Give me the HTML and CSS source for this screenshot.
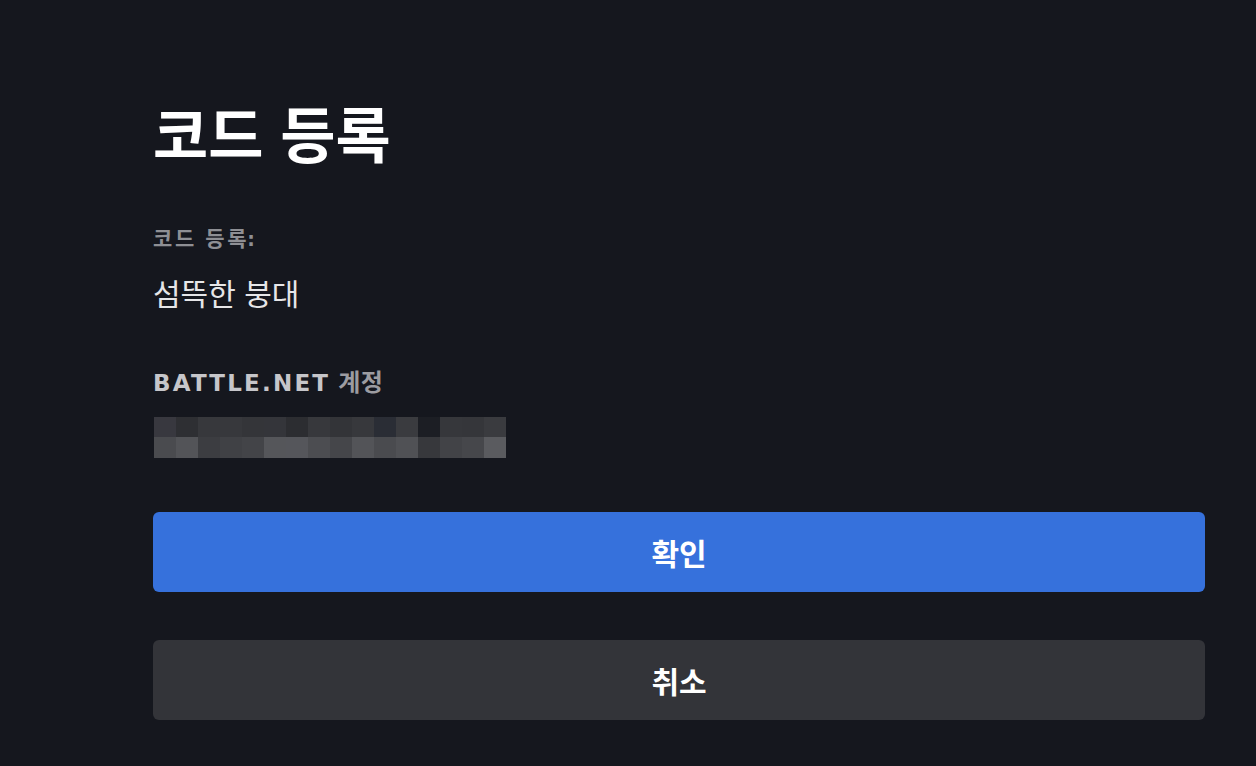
FILE: index.html
```html
<!DOCTYPE html>
<html lang="ko">
<head>
<meta charset="utf-8">
<title>코드 등록</title>
<link rel="stylesheet" href="styles.css">
</head>
<body>
<main class="page">
  <h1 class="title">코드 등록</h1>
  <section class="field">
    <div class="label">코드 등록<span class="colon">:</span></div>
    <div class="value">섬뜩한 붕대</div>
  </section>
  <section class="account">
    <div class="account-label"><span class="brand">BATTLE.NET</span> <span class="kr">계정</span></div>
    <div class="pixels">
      <i style="background:#38383f"></i><i style="background:#2e2f33"></i><i style="background:#37383c"></i><i style="background:#37383c"></i><i style="background:#343539"></i><i style="background:#34353a"></i><i style="background:#2c2d31"></i><i style="background:#37383c"></i><i style="background:#333438"></i><i style="background:#37383c"></i><i style="background:#2a2d35"></i><i style="background:#3a3b3f"></i><i style="background:#1c1e24"></i><i style="background:#36373b"></i><i style="background:#35363a"></i><i style="background:#3a3b3f"></i>
      <i style="background:#4a4b4f"></i><i style="background:#535458"></i><i style="background:#3c3d41"></i><i style="background:#404145"></i><i style="background:#434448"></i><i style="background:#55565a"></i><i style="background:#55565b"></i><i style="background:#4c4d51"></i><i style="background:#45464a"></i><i style="background:#535458"></i><i style="background:#4a4b4f"></i><i style="background:#505155"></i><i style="background:#37383c"></i><i style="background:#424347"></i><i style="background:#46474b"></i><i style="background:#5a5b5f"></i>
    </div>
  </section>
  <div class="actions">
    <button class="btn btn-primary">확인</button>
    <button class="btn btn-secondary">취소</button>
  </div>
</main>
</body>
</html>
```

FILE: styles.css
```css
html, body {
  margin: 0;
  padding: 0;
  background: #15171e;
  height: 100%;
}
body {
  font-family: "Noto Sans CJK KR", "Noto Sans", sans-serif;
  color: #ffffff;
}
.page {
  width: 1052px;
  padding: 92px 0 0 153px;
  display: flex;
  flex-direction: column;
}
.title {
  margin: 0;
  font-size: 60px;
  font-weight: 700;
  line-height: 80px;
}
.field {
  margin-top: 51px;
  display: flex;
  flex-direction: column;
}
.label {
  height: 28px;
  font-size: 21px;
  font-weight: 700;
  color: #8e8f94;
  line-height: 28px;
  letter-spacing: 2.6px;
}
.colon {
  font-family: "DejaVu Sans", sans-serif;
  font-size: 19px;
  line-height: 1;
  margin-left: -2px;
}
.value {
  margin-top: 21px;
  font-size: 30px;
  color: #e6e6e8;
  line-height: 40px;
}
.account {
  margin-top: 54px;
  display: flex;
  flex-direction: column;
}
.account-label {
  line-height: 30px;
  display: flex;
  align-items: baseline;
  gap: 8px;
}
.brand {
  font-family: "DejaVu Sans", sans-serif;
  font-weight: 700;
  font-size: 23px;
  letter-spacing: 2.2px;
  color: #c6c6ca;
}
.kr {
  font-size: 24px;
  font-weight: 700;
  color: #9c9ca1;
  letter-spacing: 0.5px;
}
.pixels {
  margin-top: 19px;
  margin-left: 1px;
  display: grid;
  grid-template-columns: repeat(16, 22px);
  grid-template-rows: 20px 21px;
  width: 352px;
}
.pixels i {
  display: block;
}
.actions {
  margin-top: 54px;
  display: flex;
  flex-direction: column;
  gap: 48px;
}
.btn {
  height: 80px;
  border: none;
  border-radius: 6px;
  font-family: "Noto Sans CJK KR", sans-serif;
  font-size: 30px;
  font-weight: 700;
  color: #ffffff;
  cursor: pointer;
}
.btn-primary {
  background: #3671dc;
}
.btn-secondary {
  background: #333439;
}
```
